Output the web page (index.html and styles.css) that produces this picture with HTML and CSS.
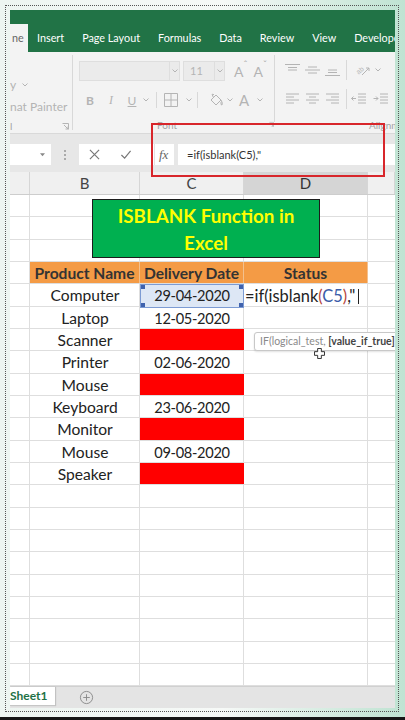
FILE: index.html
```html
<!DOCTYPE html>
<html>
<head>
<meta charset="utf-8">
<link rel="stylesheet" href="styles.css">
</head>
<body>
<div class="frame">
<div class="app">

	<div class="tabs">
		<span class="tab active">ne</span>
		<span class="tab">Insert</span>
		<span class="tab">Page Layout</span>
		<span class="tab">Formulas</span>
		<span class="tab">Data</span>
		<span class="tab">Review</span>
		<span class="tab">View</span>
		<span class="tab">Developer</span>
	</div>

	<div class="ribbon">
		<!-- clipboard (cut off on the left) -->
		<div class="group clip">
			<div class="cline first">y <svg class="chev" viewBox="0 0 6 4"><path d="M0.5 0.5 L3 3 L5.5 0.5"/></svg></div>
			<div class="cline">nat Painter</div>
			<div class="glabel"><span>l</span><svg class="launch" viewBox="0 0 7 7"><path d="M0.5 0.5 H6.5 V6.5 M2 2 L6 6 M3.5 6 H6 V3.5"/></svg></div>
		</div>
		<div class="vsep s1"></div>

		<!-- font -->
		<div class="group font">
			<div class="frow1">
				<div class="fname"><span></span><i><svg class="chev" viewBox="0 0 6 4"><path d="M0.5 0.5 L3 3 L5.5 0.5"/></svg></i></div>
				<div class="fsize"><span>11</span><i><svg class="chev" viewBox="0 0 6 4"><path d="M0.5 0.5 L3 3 L5.5 0.5"/></svg></i></div>
				<span class="grow">A<sup>ˆ</sup></span>
				<span class="grow g2">A<sup>ˇ</sup></span>
			</div>
			<div class="frow2">
				<span class="fb bold">B</span>
				<span class="fb ital">I</span>
				<span class="fb under">U</span>
				<svg class="chev c1" viewBox="0 0 6 4"><path d="M0.5 0.5 L3 3 L5.5 0.5"/></svg>
				<span class="isep i1"></span>
				<svg class="icon border" viewBox="0 0 14 14"><path d="M0.5 0.5 H13.5 V13.5 H0.5 Z M7 0.5 V13.5 M0.5 7 H13.5"/></svg>
				<svg class="chev c2" viewBox="0 0 6 4"><path d="M0.5 0.5 L3 3 L5.5 0.5"/></svg>
				<span class="isep i2"></span>
				<svg class="icon bucket" viewBox="0 0 15 15"><path d="M2 7 L7 2 L12 7 L7 12 Z M4.5 4.5 L3 1.5 Q4 0.5 5 2 M12 7 Q14 10 13 12 Q11.5 12.5 12 9"/></svg>
				<svg class="chev c3" viewBox="0 0 6 4"><path d="M0.5 0.5 L3 3 L5.5 0.5"/></svg>
				<span class="fb bigA">A</span>
				<svg class="chev c4" viewBox="0 0 6 4"><path d="M0.5 0.5 L3 3 L5.5 0.5"/></svg>
			</div>
			<div class="glabel flabel"><span>Font</span><svg class="launch" viewBox="0 0 7 7"><path d="M0.5 0.5 H6.5 V6.5 M2 2 L6 6 M3.5 6 H6 V3.5"/></svg></div>
		</div>
		<div class="vsep s2"></div>

		<!-- alignment -->
		<div class="group align">
			<div class="arow">
				<svg class="icon al" viewBox="0 0 15 14"><path d="M0 1.5 H15 M3 4.5 H12 M3 7 H12"/></svg>
				<svg class="icon al" viewBox="0 0 15 14"><path d="M3 4 H12 M0 7 H15 M3 10 H12"/></svg>
				<svg class="icon al" viewBox="0 0 15 14"><path d="M3 7 H12 M3 9.5 H12 M0 12.5 H15"/></svg>
				<span class="isep a1"></span>
				<svg class="icon orient" viewBox="0 0 16 14"><text x="1" y="9" transform="rotate(-40 6 7)">ab</text><path d="M7 12 L14 5 M11 5 H14 V8"/></svg>
				<svg class="chev c5" viewBox="0 0 6 4"><path d="M0.5 0.5 L3 3 L5.5 0.5"/></svg>
			</div>
			<div class="arow r2">
				<svg class="icon al" viewBox="0 0 15 14"><path d="M1 2 H14 M1 5 H9 M1 8 H14 M1 11 H9"/></svg>
				<svg class="icon al" viewBox="0 0 15 14"><path d="M1 2 H14 M4 5 H11 M1 8 H14 M4 11 H11"/></svg>
				<svg class="icon al" viewBox="0 0 15 14"><path d="M1 2 H14 M6 5 H14 M1 8 H14 M6 11 H14"/></svg>
				<span class="isep a2"></span>
				<svg class="icon ind" viewBox="0 0 15 14"><path d="M7 2 H15 M7 5 H15 M7 8 H15 M7 11 H15 M5 6.5 H0.5 M2.5 4.5 L0.5 6.5 L2.5 8.5"/></svg>
				<svg class="icon ind" viewBox="0 0 15 14"><path d="M7 2 H15 M7 5 H15 M7 8 H15 M7 11 H15 M0.5 6.5 H5 M3 4.5 L5 6.5 L3 8.5"/></svg>
			</div>
			<div class="glabel alabel"><span>Alignment</span></div>
		</div>
	</div>

	<div class="fbar">
		<div class="namebox"><svg class="tri" viewBox="0 0 6 4"><path d="M0 0 H6 L3 3.5 Z"/></svg></div>
		<div class="grip"><i></i><i></i><i></i></div>
		<div class="fbtns">
			<svg class="fbi" viewBox="0 0 12 12"><path d="M1 1 L11 11 M11 1 L1 11"/></svg>
			<svg class="fbi ok" viewBox="0 0 12 12"><path d="M1 6.5 L4.5 10 L11 2"/></svg>
			<span class="fx">fx</span>
		</div>
		<div class="finput">=if(isblank(C5),"</div>
	</div>

	<div class="redbox"></div>

	<div class="colheads">
		<div></div>
		<div>B</div>
		<div>C</div>
		<div class="on">D</div>
		<div></div>
	</div>

	<div class="sheet">
		<div class="row"></div>
		<div class="row"></div>
		<div class="row"></div>
		<div class="row hrow"><div></div><div class="hd">Product Name</div><div class="hd">Delivery Date</div><div class="hd">Status</div><div></div></div>
		<div class="row"><div></div><div>Computer</div><div class="dt sel">29-04-2020</div><div class="edit">=if(isblank<span class="pr">(</span><span class="ref">C5</span><span class="pr">)</span>,"<span class="caret"></span></div><div></div></div>
		<div class="row"><div></div><div>Laptop</div><div class="dt">12-05-2020</div><div></div><div></div></div>
		<div class="row"><div></div><div>Scanner</div><div class="blank"></div><div></div><div></div></div>
		<div class="row"><div></div><div>Printer</div><div class="dt">02-06-2020</div><div></div><div></div></div>
		<div class="row"><div></div><div>Mouse</div><div class="blank"></div><div></div><div></div></div>
		<div class="row"><div></div><div>Keyboard</div><div class="dt">23-06-2020</div><div></div><div></div></div>
		<div class="row"><div></div><div>Monitor</div><div class="blank"></div><div></div><div></div></div>
		<div class="row"><div></div><div>Mouse</div><div class="dt">09-08-2020</div><div></div><div></div></div>
		<div class="row"><div></div><div>Speaker</div><div class="blank"></div><div></div><div></div></div>
		<div class="row"></div>
		<div class="row"></div>
		<div class="row"></div>
		<div class="row"></div>
		<div class="row"></div>
		<div class="row"></div>
		<div class="row"></div>
		<div class="row"></div>
		<div class="row"></div>

		<div class="title">ISBLANK Function in<br>Excel</div>
		<div class="tip">IF(logical_test, <b>[value_if_true]</b>, [value_if_false])</div>
		<svg class="cursor" viewBox="0 0 12 12"><path d="M4 0.5 H8 V4 H11.5 V8 H8 V11.5 H4 V8 H0.5 V4 H4 Z"/></svg>
	</div>

	<div class="sheettabs">
		<div class="stab">Sheet1</div>
		<svg class="addsheet" viewBox="0 0 16 16"><circle cx="8" cy="8" r="6.5"/><path d="M8 4.5 V11.5 M4.5 8 H11.5"/></svg>
	</div>

</div>
</div>
<div class="blackbar"></div>
</body>
</html>
```

FILE: styles.css
```css
*
{
	box-sizing: border-box;
}

body
{
	margin: 0;
	padding: 5px 0 0 5px;
	width: 405px;
	height: 720px;
	overflow: hidden;
	background: linear-gradient(90deg, #edf5f1 0%, #f6f9f7 55%, #bfe3d2 100%);
	font-family: Lato, "Liberation Sans", sans-serif;
}

.frame
{
	width: 394px;
	border: 1px dotted #555;
	padding: 4px 3px 3px 4px;
}

.app
{
	position: relative;
	width: 385px;
	height: 698px;
	overflow: hidden;
	background: #fff;
}

.blackbar
{
	margin: 5px 0 0 -5px;
	height: 4px;
	background: #151515;
}

/* ribbon tabs */
.tabs
{
	height: 42px;
	background: #217346;
	display: flex;
	align-items: flex-end;
}

.tab
{
	flex-shrink: 0;
	height: 28px;
	line-height: 27px;
	padding: 0 9px;
	color: #fff;
	font-size: 10.8px;
	white-space: nowrap;
}

.tab.active
{
	width: 18px;
	padding: 0 0 0 2px;
	background: #f3f3f3;
	color: #666;
}

/* ribbon body */
.ribbon
{
	height: 82px;
	background: #f3f3f3;
	border-bottom: 1px solid #d9d9d9;
	display: flex;
	color: #b4b4b4;
}

.ribbon svg path
{
	fill: none;
	stroke: #b4b4b4;
	stroke-width: 1;
}

.group
{
	display: flex;
	flex-direction: column;
	flex-shrink: 0;
}

.vsep
{
	width: 1px;
	background: #d8d8d8;
	margin-top: 3px;
	flex-shrink: 0;
}

.vsep.s1 { height: 75px; }
.vsep.s2 { height: 67px; }

.glabel
{
	margin-top: auto;
	height: 17px;
	line-height: 16px;
	font-size: 10px;
	color: #a3a3a3;
	display: flex;
	align-items: center;
	white-space: nowrap;
}

.launch
{
	width: 7px;
	height: 7px;
}

.chev
{
	width: 6px;
	height: 4px;
	flex-shrink: 0;
}

/* clipboard */
.group.clip
{
	width: 62px;
}

.cline
{
	height: 22px;
	line-height: 22px;
	font-size: 12px;
	white-space: nowrap;
	display: flex;
	align-items: center;
	gap: 6px;
}

.cline.first
{
	margin-top: 22px;
}

.clip .glabel
{
	justify-content: space-between;
	padding-right: 3px;
}

/* font group */
.group.font
{
	width: 201px;
}

.frow1
{
	display: flex;
	align-items: center;
	margin-top: 9px;
	padding-left: 6px;
	height: 20px;
}

.fname, .fsize
{
	height: 20px;
	background: #ebebeb;
	border: 1px solid #dedede;
	display: flex;
}

.fname { width: 101px; }

.fsize
{
	width: 42px;
	margin-left: 3px;
	font-size: 11px;
	line-height: 18px;
}

.fname span, .fsize span
{
	flex: 1;
	padding-left: 6px;
}

.fname i, .fsize i
{
	width: 10px;
	border-left: 1px solid #dedede;
	display: flex;
	align-items: center;
	justify-content: center;
}

.grow
{
	font-size: 14px;
	margin-left: 9px;
	position: relative;
}

.grow sup
{
	position: absolute;
	top: -5px;
	right: -4px;
	font-size: 10px;
}

.grow.g2 { margin-left: 10px; }

.frow2
{
	display: flex;
	align-items: center;
	margin-top: 11px;
	padding-left: 12px;
	height: 16px;
}

.fb
{
	font-size: 12px;
	width: 10px;
	text-align: center;
}

.fb.bold { font-weight: bold; }
.fb.ital { font-family: "Liberation Serif", serif; font-style: italic; margin-left: 12px; width: 8px; }
.fb.under { text-decoration: underline; margin-left: 12px; }
.fb.bigA { font-size: 15px; width: 12px; margin-left: 5px; }

.chev.c1 { margin-left: 6px; }
.chev.c2 { margin-left: 8px; }
.chev.c3 { margin-left: 3px; }
.chev.c4 { margin-left: 7px; }
.chev.c5 { margin-left: 4px; }

.isep
{
	width: 1px;
	height: 16px;
	background: #d8d8d8;
}

.isep.i1 { margin-left: 7px; }
.isep.i2 { margin-left: 5px; }

.icon.border
{
	width: 14px;
	height: 14px;
	margin-left: 7px;
}

.icon.bucket
{
	width: 15px;
	height: 15px;
	margin-left: 11px;
}

.flabel
{
	padding-left: 84px;
}

.flabel .launch
{
	margin-left: 92px;
}

/* alignment group */
.group.align
{
	width: 120px;
}

.arow
{
	display: flex;
	align-items: center;
	margin-top: 10px;
	padding-left: 10px;
	height: 16px;
}

.arow.r2
{
	margin-top: 13px;
}

.icon.al
{
	width: 15px;
	height: 14px;
	margin-right: 5px;
}

.isep.a1, .isep.a2
{
	height: 20px;
	margin-left: 1px;
	margin-right: 8px;
}

.isep.a2 { margin-right: 4px; }

.icon.orient
{
	width: 16px;
	height: 14px;
}

.icon.orient text
{
	font-size: 7px;
	fill: #b4b4b4;
	font-family: "Liberation Sans", sans-serif;
}

.icon.ind
{
	width: 15px;
	height: 14px;
	margin-right: 7px;
}

.alabel
{
	padding-left: 94px;
}

/* formula bar */
.fbar
{
	height: 38px;
	background: #e7e7e7;
	display: flex;
	align-items: flex-start;
	padding-top: 10px;
}

.namebox
{
	width: 41px;
	height: 21px;
	background: #fff;
	display: flex;
	align-items: center;
	justify-content: flex-end;
	padding-right: 6px;
}

.tri
{
	width: 5px;
	height: 4px;
}

.tri path
{
	fill: #888;
}

.grip
{
	width: 28px;
	height: 21px;
	display: flex;
	flex-direction: column;
	align-items: center;
	justify-content: center;
	gap: 2px;
}

.grip i
{
	width: 2px;
	height: 2px;
	background: #aaa;
}

.fbtns
{
	width: 95px;
	height: 21px;
	background: #fff;
	display: flex;
	align-items: center;
	padding-left: 10px;
}

.fbi
{
	width: 11px;
	height: 11px;
}

.fbi path
{
	fill: none;
	stroke: #777;
	stroke-width: 1.3;
}

.fbi.ok
{
	margin-left: 20px;
	width: 12px;
}

.fx
{
	margin-left: 22px;
	font-family: "Liberation Serif", serif;
	font-style: italic;
	font-size: 13px;
	color: #666;
	border-left: 1px solid #e2e2e2;
	padding-left: 4px;
	line-height: 21px;
}

.finput
{
	flex: 1;
	height: 21px;
	margin-left: 4px;
	background: #fff;
	padding-left: 9px;
	font-size: 11px;
	line-height: 21px;
	color: #333;
	white-space: nowrap;
}

.redbox
{
	position: absolute;
	left: 141px;
	top: 113px;
	width: 234px;
	height: 54px;
	border: 2px solid #d8262b;
}

/* column headers */
.colheads
{
	height: 23px;
	display: grid;
	grid-template-columns: 20px 110px 104px 124px 27px;
	background: #f0f0f0;
	border-bottom: 1px solid #cdcdcd;
}

.colheads div
{
	border-right: 1px solid #d6d6d6;
	text-align: center;
	font-size: 15px;
	line-height: 22px;
	color: #444;
}

.colheads div.on
{
	background: #d5d5d5;
	color: #333;
}

/* cells */
.sheet
{
	position: relative;
	height: 491.3px;
	background-image:
		linear-gradient(#dedede, #dedede),
		linear-gradient(#dedede, #dedede),
		linear-gradient(#dedede, #dedede),
		linear-gradient(#dedede, #dedede);
	background-size: 1px 100%;
	background-repeat: no-repeat;
	background-position: 19px 0, 129px 0, 233px 0, 357px 0;
}

.row
{
	display: grid;
	grid-template-columns: 20px 110px 104px 124px 27px;
	height: 22.33px;
	border-bottom: 1px solid #dedede;
	font-size: 15.6px;
	color: #222;
}

.row div
{
	text-align: center;
	line-height: 23.5px;
	white-space: nowrap;
	overflow: hidden;
}

.row .dt
{
	font-size: 14.6px;
	letter-spacing: -0.3px;
}

.row .hd
{
	background: #f49b45;
	font-weight: bold;
	color: #333;
	border-right: 1px solid #f3c08e;
}

.row .blank
{
	background: #ff0000;
}

.row .sel
{
	background:
		linear-gradient(#3f62ad, #3f62ad) left top / 4px 4px no-repeat,
		linear-gradient(#3f62ad, #3f62ad) right top / 4px 4px no-repeat,
		linear-gradient(#3f62ad, #3f62ad) left bottom / 4px 4px no-repeat,
		linear-gradient(#3f62ad, #3f62ad) right bottom / 4px 4px no-repeat,
		#dde7f5;
	border: 1px solid #7c9bd3;
	line-height: 21.5px;
}

.row .edit
{
	text-align: left;
	padding-left: 1px;
	font-size: 16.4px;
	overflow: visible;
}

.pr { color: #b5453c; }
.ref { color: #3a5ca8; }

.caret
{
	display: inline-block;
	width: 1px;
	height: 15px;
	margin-left: 3px;
	vertical-align: -2px;
	background: #222;
}

.title
{
	position: absolute;
	left: 82px;
	top: 4px;
	width: 228px;
	height: 59px;
	background: #00b050;
	border: 1px solid #1c1c1c;
	color: #ffff00;
	font-weight: bold;
	font-size: 18.8px;
	line-height: 27px;
	text-align: center;
	padding-top: 2px;
}

.tip
{
	position: absolute;
	left: 244px;
	top: 137px;
	width: 230px;
	height: 19px;
	background: #fff;
	border: 1px solid #c8c8c8;
	border-radius: 3px;
	box-shadow: 0 1px 2px rgba(0,0,0,0.12);
	font-size: 10.5px;
	line-height: 17px;
	padding-left: 5px;
	color: #8a8a8a;
	white-space: nowrap;
}

.tip b
{
	color: #444;
}

.cursor
{
	position: absolute;
	left: 304px;
	top: 153px;
	width: 11px;
	height: 11px;
}

.cursor path
{
	fill: #fff;
	stroke: #222;
	stroke-width: 1;
}

/* sheet tabs */
.sheettabs
{
	height: 21.7px;
	background: #e4e4e4;
	border-top: 1px solid #d0d0d0;
	display: flex;
	align-items: flex-start;
}

.stab
{
	width: 45px;
	height: 19px;
	background: #fff;
	border-bottom: 1px solid #c6c6c6;
	box-shadow: 1px 0 1px rgba(0,0,0,0.15);
	color: #1e7145;
	font-weight: bold;
	font-size: 12px;
	line-height: 18px;
	white-space: nowrap;
	overflow: hidden;
}

.addsheet
{
	width: 15px;
	height: 15px;
	margin: 3px 0 0 24px;
}

.addsheet circle, .addsheet path
{
	fill: none;
	stroke: #8a8a8a;
	stroke-width: 1;
}
```
